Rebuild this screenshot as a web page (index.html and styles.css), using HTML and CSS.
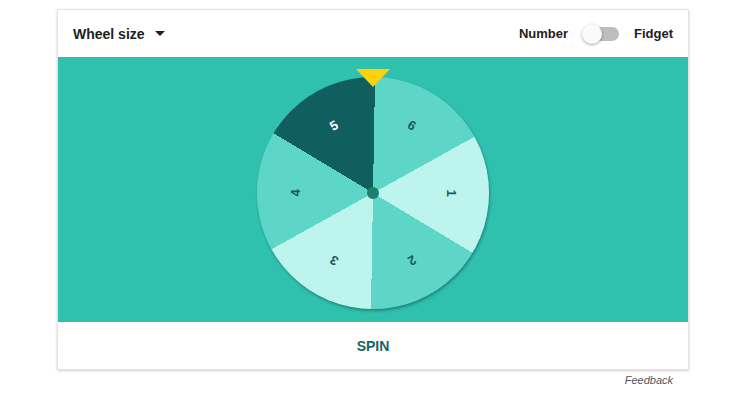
FILE: index.html
```html
<!DOCTYPE html>
<html>
<head>
<meta charset="utf-8">
<link rel="stylesheet" href="styles.css">
</head>
<body>
<div class="page">
  <div class="card">
    <div class="header">
      <div class="size">Wheel size <span class="caret"></span></div>
      <div class="mode">
        <span class="mode-label">Number</span>
        <span class="switch"><span class="knob"></span></span>
        <span class="mode-label">Fidget</span>
      </div>
    </div>
    <div class="stage">
      <div class="pointer"></div>
      <div class="wheel">
        <span class="label l6">6</span>
        <span class="label l1">1</span>
        <span class="label l2">2</span>
        <span class="label l3">3</span>
        <span class="label l4">4</span>
        <span class="label l5">5</span>
        <span class="hub"></span>
      </div>
    </div>
    <div class="footer">SPIN</div>
  </div>
  <div class="feedback">Feedback</div>
</div>
</body>
</html>
```
FILE: styles.css
```css
html, body {
  margin: 0;
  padding: 0;
  background: #fff;
  font-family: "Liberation Sans", Arial, sans-serif;
}
.page {
  padding: 9px 47px 0 57px;
}
.card {
  width: 630px;
  border: 1px solid #e2e2e2;
  border-radius: 2px;
  box-shadow: 0 1px 3px rgba(0,0,0,0.18);
  background: #fff;
  overflow: hidden;
}
.header {
  height: 47px;
  display: flex;
  align-items: center;
  justify-content: space-between;
  padding: 0 15px;
  font-size: 14px;
  font-weight: bold;
  color: #212121;
}
.size {
  display: flex;
  align-items: center;
}
.caret {
  display: inline-block;
  width: 0;
  height: 0;
  margin-left: 10px;
  border-left: 5px solid transparent;
  border-right: 5px solid transparent;
  border-top: 5px solid #222;
}
.mode {
  display: flex;
  align-items: center;
}
.mode-label {
  font-size: 13px;
}
.switch {
  position: relative;
  width: 35px;
  height: 14px;
  border-radius: 7px;
  background: #bdbdbd;
  margin: 0 15px 0 16px;
}
.knob {
  position: absolute;
  left: -2px;
  top: -3px;
  width: 20px;
  height: 20px;
  border-radius: 50%;
  background: #fafafa;
  box-shadow: 0 1px 3px rgba(0,0,0,0.35);
}
.stage {
  position: relative;
  height: 265px;
  background: #2fc0ae;
  display: flex;
  justify-content: center;
  padding-top: 20px;
  box-sizing: border-box;
}
.pointer {
  position: absolute;
  top: 12px;
  left: 50%;
  margin-left: -17px;
  width: 0;
  height: 0;
  border-left: 17px solid transparent;
  border-right: 17px solid transparent;
  border-top: 18px solid #ffd10a;
  z-index: 2;
}
.wheel {
  position: relative;
  width: 232px;
  height: 232px;
  border-radius: 50%;
  background: conic-gradient(from 1deg,
    #5dd6c8 0deg 60deg,
    #bdf4ed 60deg 120deg,
    #5dd6c8 120deg 180deg,
    #bdf4ed 180deg 240deg,
    #5dd6c8 240deg 300deg,
    #115e5f 300deg 360deg);
  box-shadow: 1px 2px 3px rgba(0,0,0,0.3);
}
.label {
  position: absolute;
  left: 50%;
  top: 50%;
  font-size: 13px;
  font-weight: bold;
  color: #1b5a5b;
  line-height: 1;
}
.l6 { transform: translate(-50%, -50%) rotate(30deg) translateY(-78px); }
.l1 { transform: translate(-50%, -50%) rotate(90deg) translateY(-78px); }
.l2 { transform: translate(-50%, -50%) rotate(150deg) translateY(-78px); }
.l3 { transform: translate(-50%, -50%) rotate(210deg) translateY(-78px); }
.l4 { transform: translate(-50%, -50%) rotate(270deg) translateY(-78px); }
.l5 { transform: translate(-50%, -50%) rotate(330deg) translateY(-78px); color: #fff; }
.hub {
  position: absolute;
  left: 50%;
  top: 50%;
  width: 12px;
  height: 12px;
  margin: -6px 0 0 -6px;
  border-radius: 50%;
  background: #1e7e72;
}
.footer {
  height: 47px;
  display: flex;
  align-items: center;
  justify-content: center;
  font-size: 14px;
  font-weight: bold;
  color: #146464;
}
.feedback {
  width: 616px;
  text-align: right;
  font-size: 11px;
  font-style: italic;
  color: #555;
  margin-top: 4px;
}
```
